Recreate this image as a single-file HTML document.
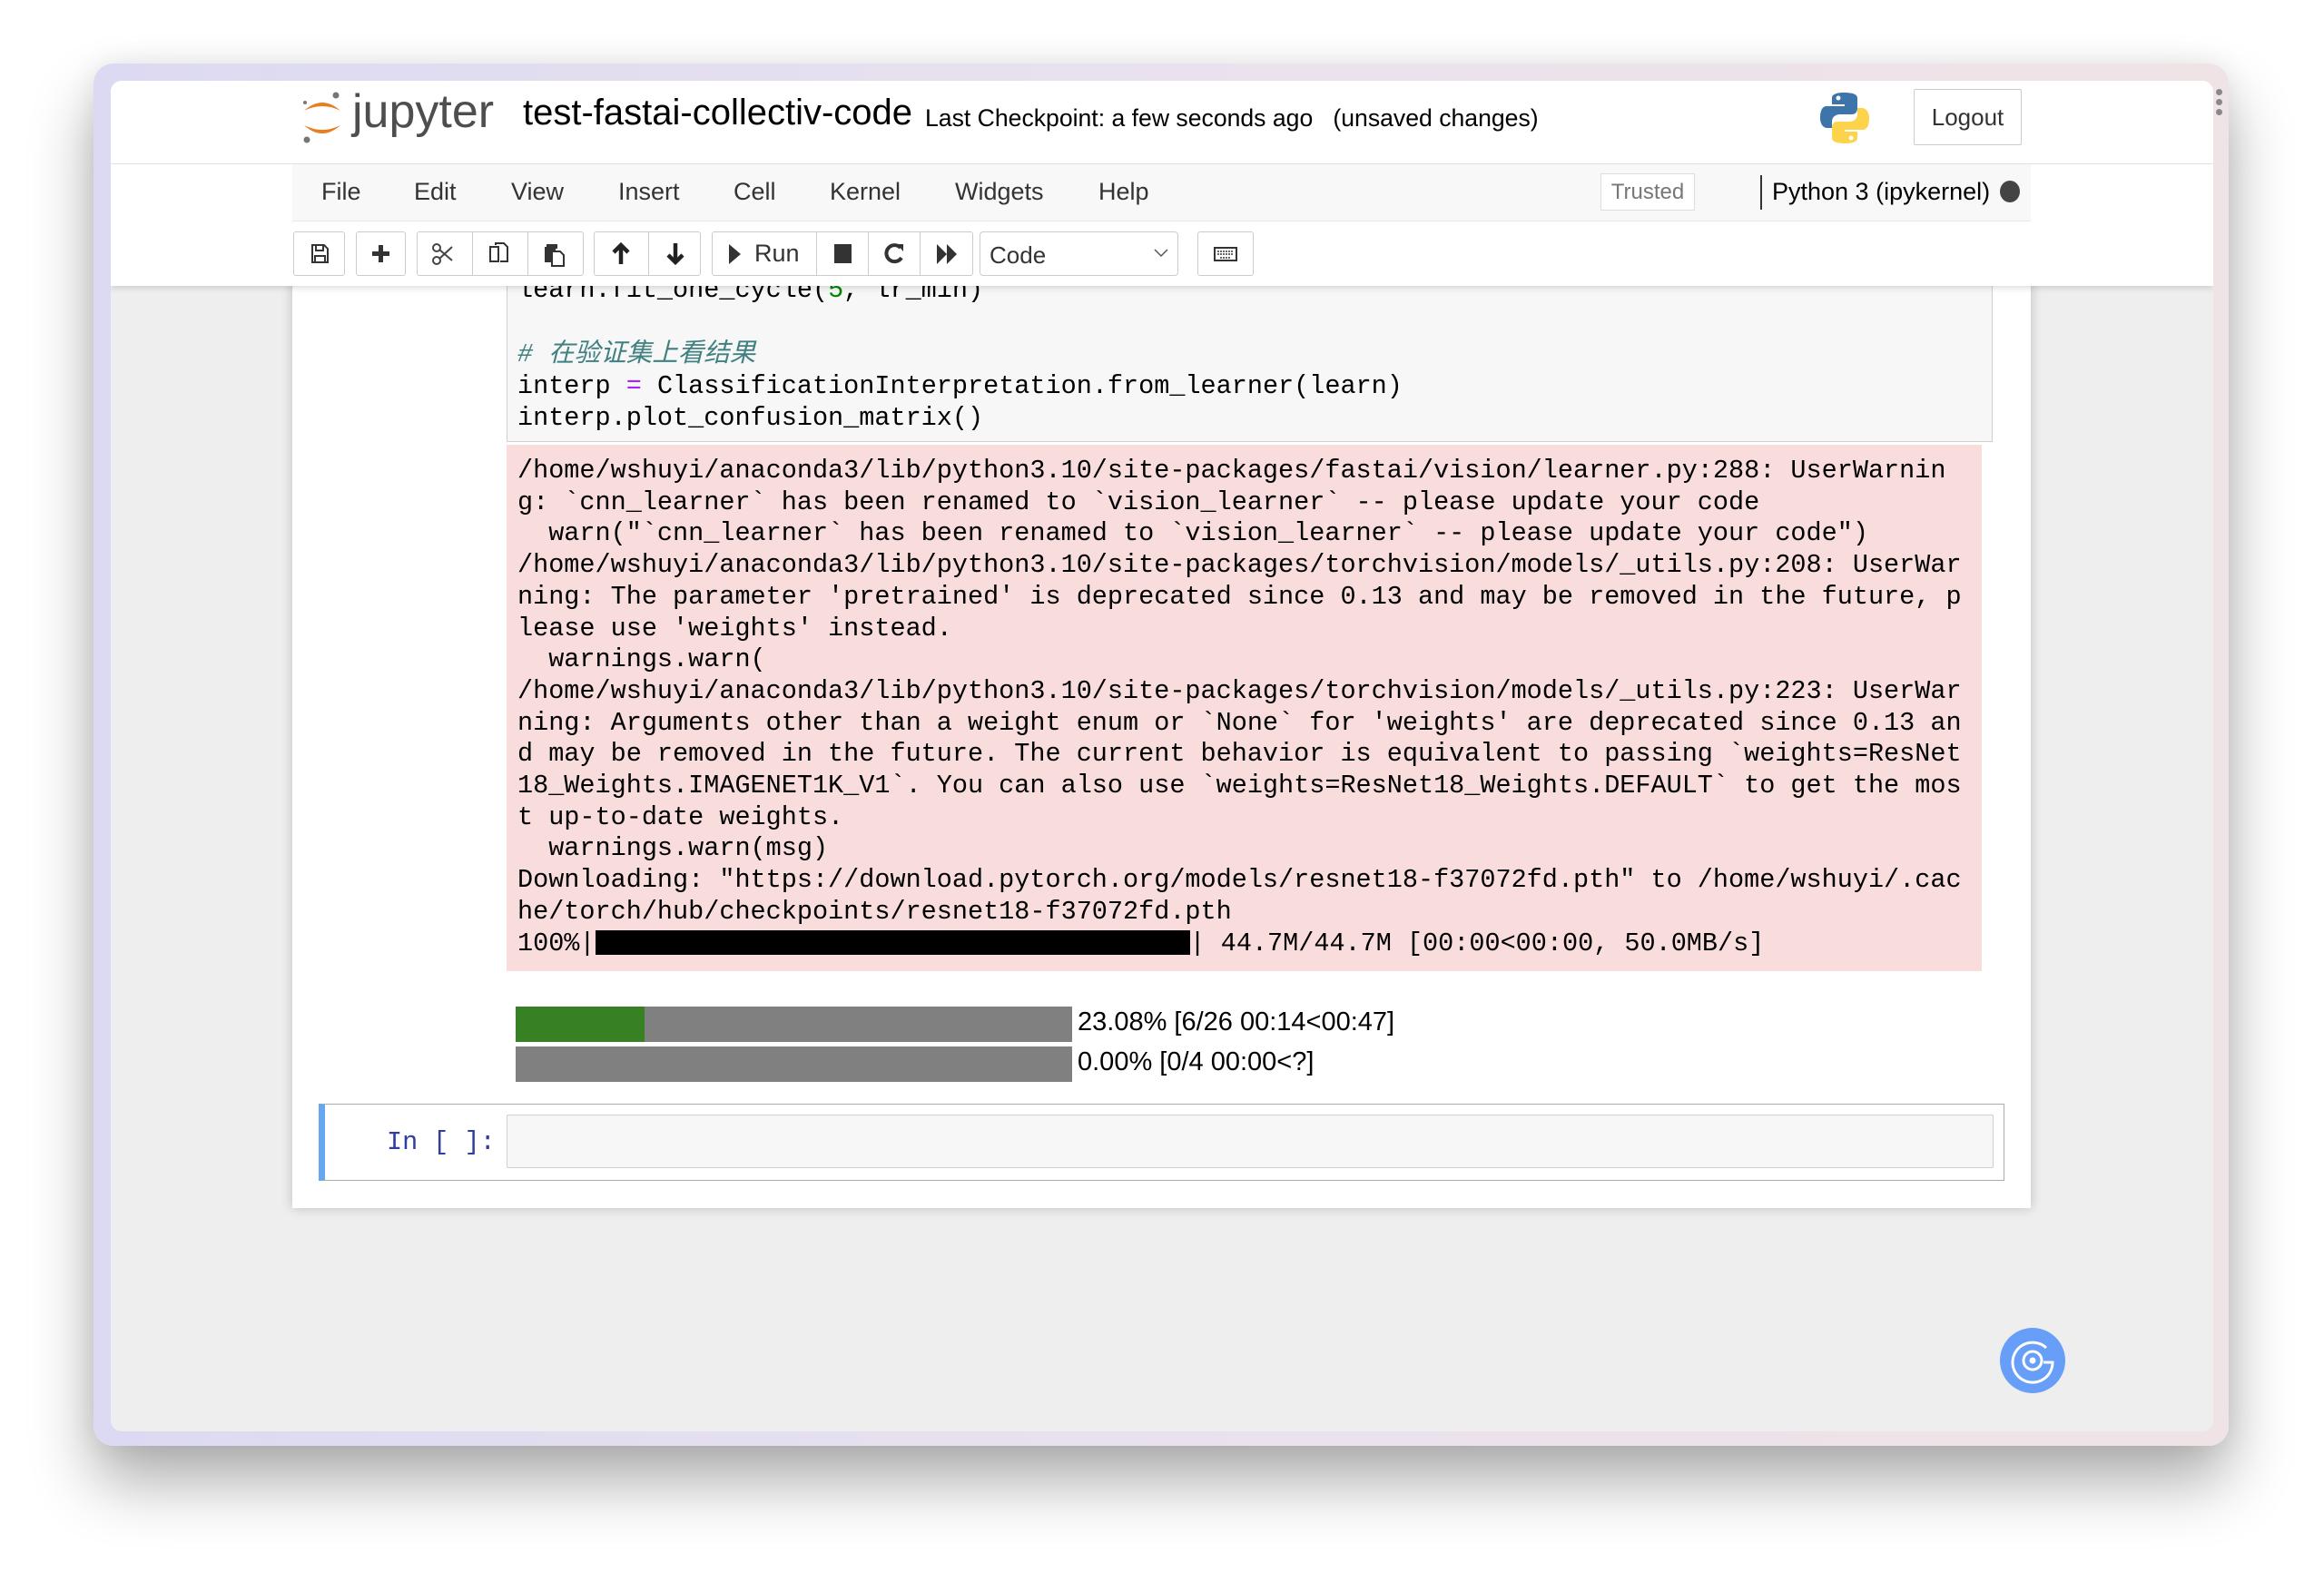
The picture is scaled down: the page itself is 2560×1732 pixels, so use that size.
<!DOCTYPE html>
<html><head><meta charset="utf-8"><style>
*{margin:0;padding:0;box-sizing:border-box}
html,body{width:2560px;height:1732px;background:#fff;overflow:hidden;font-family:"Liberation Sans","Noto Sans CJK SC",sans-serif}
.abs{position:absolute}
#frame{position:absolute;left:103px;top:70px;width:2352px;height:1523px;border-radius:22px;background:linear-gradient(90deg,#dcdaf2,#e9e2ee 50%,#efe3e5);box-shadow:0 40px 70px rgba(0,0,0,0.32),0 0 30px rgba(0,0,0,0.08)}
#inner{position:absolute;left:122px;top:89px;width:2316px;height:1488px;border-radius:12px;background:#eee;overflow:hidden}
.mono{font-family:"Liberation Mono","Noto Sans CJK SC",monospace;font-size:28.5px;white-space:pre;color:#000}
.btn{position:absolute;top:255px;height:49px;background:#fff;border:1px solid #ccc;border-radius:3px}
.seg{position:absolute;top:0;height:47px;border-left:1px solid #ccc}
.menu{position:absolute;top:196px;font-size:27px;color:#333;white-space:nowrap}
</style></head><body>
<div id="frame"></div>
<div id="inner">
 <div class="abs" style="left:0;top:0;width:2316px;height:92px;background:#fff;border-bottom:1px solid #e4e4e4"></div>
 <div class="abs" style="left:0;top:92px;width:2316px;height:134px;background:#fff;box-shadow:0 3px 6px rgba(0,0,0,0.12);z-index:3"></div>
</div>

<div class="abs" style="left:322px;top:300px;width:1915px;height:1031px;background:#fff;box-shadow:0 0 12px rgba(0,0,0,0.2)"></div>
<div class="abs" style="left:558px;top:300px;width:1637px;height:187px;background:#f7f7f7;border:1px solid #cfcfcf;border-top:none"></div>
<div class="abs mono" style="left:570px;top:302px;line-height:35.3px">learn.fit_one_cycle(<span style="color:#080">5</span>, lr_min)

<span style="color:#408080;font-style:italic"># 在验证集上看结果</span>
interp <span style="color:#a2f">=</span> ClassificationInterpretation.from_learner(learn)
interp.plot_confusion_matrix()</div>
<div class="abs" style="left:558px;top:490px;width:1625px;height:580px;background:#f9dcdc"></div>
<div class="abs mono" style="left:570px;top:502px;line-height:34.7px">/home/wshuyi/anaconda3/lib/python3.10/site-packages/fastai/vision/learner.py:288: UserWarnin
g: `cnn_learner` has been renamed to `vision_learner` -- please update your code
  warn("`cnn_learner` has been renamed to `vision_learner` -- please update your code")
/home/wshuyi/anaconda3/lib/python3.10/site-packages/torchvision/models/_utils.py:208: UserWar
ning: The parameter 'pretrained' is deprecated since 0.13 and may be removed in the future, p
lease use 'weights' instead.
  warnings.warn(
/home/wshuyi/anaconda3/lib/python3.10/site-packages/torchvision/models/_utils.py:223: UserWar
ning: Arguments other than a weight enum or `None` for 'weights' are deprecated since 0.13 an
d may be removed in the future. The current behavior is equivalent to passing `weights=ResNet
18_Weights.IMAGENET1K_V1`. You can also use `weights=ResNet18_Weights.DEFAULT` to get the mos
t up-to-date weights.
  warnings.warn(msg)
Downloading: "https://download.pytorch.org/models/resnet18-f37072fd.pth" to /home/wshuyi/.cac
he/torch/hub/checkpoints/resnet18-f37072fd.pth
100%|<span style="display:inline-block;width:655px;height:27px;background:#000;vertical-align:-5px"></span>| 44.7M/44.7M [00:00&lt;00:00, 50.0MB/s]</div>
<div class="abs" style="left:568px;top:1109px;width:613px;height:39px;background:#808080"></div>
<div class="abs" style="left:568px;top:1109px;width:142px;height:39px;background:#388024"></div>
<div class="abs" style="left:568px;top:1153px;width:613px;height:39px;background:#808080"></div>
<div class="abs" style="left:1187px;top:1110px;font-size:29px;color:#000">23.08% [6/26 00:14&lt;00:47]</div>
<div class="abs" style="left:1187px;top:1154px;font-size:29px;color:#000">0.00% [0/4 00:00&lt;?]</div>
<div class="abs" style="left:351px;top:1216px;width:1857px;height:85px;border:1px solid #ababab;border-left:7px solid #64a8f0;background:#fff"></div>
<div class="abs mono" style="left:426px;top:1242px;color:#303f9f">In [ ]:</div>
<div class="abs" style="left:558px;top:1228px;width:1638px;height:59px;background:#f7f7f7;border:1px solid #cfcfcf;border-radius:2px"></div>

<svg class="abs" style="left:330px;top:100px;z-index:5" width="50" height="60" viewBox="0 0 50 60">
 <path d="M5 22 Q25 4 45 22 Q25 12 5 22Z" fill="#e67e22"/>
 <path d="M5 38 Q25 56 45 38 Q25 48 5 38Z" fill="#e67e22"/>
 <circle cx="40" cy="5" r="3.5" fill="#767677"/><circle cx="6" cy="13" r="2" fill="#767677"/><circle cx="8" cy="54" r="3.5" fill="#767677"/>
</svg>
<div class="abs" style="left:388px;top:93px;font-size:52px;color:#4e4e4e;z-index:5">jupyter</div>
<div class="abs" style="left:576px;top:102px;font-size:40px;color:#000;z-index:5;white-space:nowrap">test-fastai-collectiv-code</div>
<div class="abs" style="left:1019px;top:115px;font-size:26.6px;color:#000;white-space:pre;z-index:5">Last Checkpoint: a few seconds ago   (unsaved changes)</div>
<svg class="abs" style="left:2003px;top:100px;z-index:5" width="58" height="60" viewBox="0 0 58 60">
 <path d="M28 2 C14 2 15 8 15 8 L15 15 L29 15 L29 17 L9 17 C3 17 2 25 2 30 C2 36 5 41 10 41 L15 41 L15 34 C15 29 19 26 24 26 L37 26 C41 26 43 23 43 19 L43 8 C43 4 38 2 28 2Z" fill="#3d74aa"/>
 <circle cx="22" cy="8" r="2.5" fill="#fff"/>
 <path d="M30 58 C44 58 43 52 43 52 L43 45 L29 45 L29 43 L49 43 C55 43 56 35 56 30 C56 24 53 19 48 19 L43 19 L43 26 C43 31 39 34 34 34 L21 34 C17 34 15 37 15 41 L15 52 C15 56 20 58 30 58Z" fill="#fcd34a"/>
 <circle cx="36" cy="52" r="2.5" fill="#fff"/>
</svg>
<div class="abs" style="left:2108px;top:98px;width:119px;height:62px;border:1px solid #ccc;border-radius:2px;background:#fff;font-size:26px;line-height:60px;text-align:center;color:#333;z-index:5">Logout</div>
<div class="abs" style="left:2441px;top:98px;width:8px;height:30px;z-index:5">
 <div style="width:7px;height:7px;border-radius:50%;background:#888;margin-bottom:4px"></div><div style="width:7px;height:7px;border-radius:50%;background:#888;margin-bottom:4px"></div><div style="width:7px;height:7px;border-radius:50%;background:#888"></div></div>

<div class="abs" style="left:322px;top:181px;width:1915px;height:63px;background:#f8f8f8;border-bottom:1px solid #e7e7e7;z-index:5"></div>
<div style="z-index:6;position:absolute;left:0;top:0">
<div class="menu" style="left:354px">File</div>
<div class="menu" style="left:456px">Edit</div>
<div class="menu" style="left:563px">View</div>
<div class="menu" style="left:681px">Insert</div>
<div class="menu" style="left:808px">Cell</div>
<div class="menu" style="left:914px">Kernel</div>
<div class="menu" style="left:1052px">Widgets</div>
<div class="menu" style="left:1210px">Help</div>
<div class="abs" style="left:1763px;top:191px;width:104px;height:41px;border:1px solid #ddd;background:#fff;font-size:24px;line-height:39px;text-align:center;color:#777">Trusted</div>
<div class="abs" style="left:1939px;top:193px;width:2px;height:38px;background:#333"></div>
<div class="menu" style="left:1952px;color:#000">Python 3 (ipykernel)</div>
<div class="abs" style="left:2203px;top:199px;width:22px;height:24px;border-radius:50%;background:#444"></div>

<div class="btn" style="left:323px;width:57px"><svg width="55" height="47"><path d="M20 14h13l4 4v15h-17z" fill="none" stroke="#333" stroke-width="2"/><rect x="24" y="14" width="8" height="6" fill="none" stroke="#333" stroke-width="2"/><rect x="23" y="26" width="11" height="7" fill="none" stroke="#333" stroke-width="2"/></svg></div>
<div class="btn" style="left:392px;width:55px"><svg width="53" height="47"><path d="M26.5 14v19M17 23.5h19" stroke="#333" stroke-width="5"/></svg></div>
<div class="btn" style="left:459px;width:184px">
 <svg class="abs" style="left:0;top:0" width="60" height="47"><circle cx="21" cy="17" r="4" fill="none" stroke="#444" stroke-width="2"/><circle cx="21" cy="31" r="4" fill="none" stroke="#444" stroke-width="2"/><path d="M24 19L38 31M24 29L38 16" stroke="#444" stroke-width="2"/></svg>
 <div class="seg" style="left:60px"><svg width="60" height="47"><path d="M19 16h9v16h-9z M25 14v-2h9l4 4v16h-8" fill="none" stroke="#333" stroke-width="2"/></svg></div>
 <div class="seg" style="left:121px"><svg width="60" height="47"><path d="M20 13h12v5h-12z" fill="#333"/><path d="M18 16h12v17h-12z" fill="#333"/><path d="M26 21h9l4 4v12h-13z" fill="#fff" stroke="#333" stroke-width="2"/></svg></div>
</div>
<div class="btn" style="left:654px;width:118px">
 <svg class="abs" style="left:0" width="58" height="47"><path d="M29 35V14M21 22l8-8 8 8" fill="none" stroke="#222" stroke-width="4.5"/></svg>
 <div class="seg" style="left:59px"><svg width="58" height="47"><path d="M29 12v21M21 25l8 8 8-8" fill="none" stroke="#222" stroke-width="4.5"/></svg></div>
</div>
<div class="btn" style="left:784px;width:288px">
 <svg class="abs" style="left:0" width="115" height="47"><path d="M18 13l13 11-13 11z" fill="#333"/></svg>
 <div class="abs" style="left:46px;top:8px;font-size:27px;color:#333">Run</div>
 <div class="seg" style="left:114px"><svg width="56" height="47"><rect x="19" y="13" width="19" height="21" fill="#333"/></svg></div>
 <div class="seg" style="left:171px"><svg width="56" height="47"><path d="M35 17a9 9 0 1 0 1 11" fill="none" stroke="#333" stroke-width="4"/><path d="M31 13h7v8z" fill="#333"/></svg></div>
 <div class="seg" style="left:228px"><svg width="58" height="47"><path d="M18 13l11 11-11 11zM29 13l11 11-11 11z" fill="#333"/></svg></div>
</div>
<div class="btn" style="left:1079px;width:219px;border-radius:4px"><div class="abs" style="left:10px;top:10px;font-size:26px;color:#333">Code</div><svg class="abs" style="left:190px;top:17px" width="18" height="12"><path d="M2 2l7 7 7-7" fill="none" stroke="#555" stroke-width="1.5"/></svg></div>
<div class="btn" style="left:1319px;width:62px"><svg width="60" height="47"><rect x="18" y="17" width="24" height="14" fill="none" stroke="#333" stroke-width="2"/><path d="M21 21h18M21 24h18M24 28h12" stroke="#333" stroke-width="1.5" stroke-dasharray="2 1"/></svg></div>
</div>

<svg class="abs" style="left:2203px;top:1463px" width="72" height="72" viewBox="0 0 72 72">
 <circle cx="36" cy="36" r="36" fill="#669ef8"/>
 <path d="M51 22 A22 22 0 1 0 58 38 L48 38" fill="none" stroke="#fff" stroke-width="3"/>
 <circle cx="36" cy="36" r="10" fill="none" stroke="#fff" stroke-width="3"/>
 <circle cx="36" cy="36" r="3.5" fill="#fff"/>
</svg>
</body></html>
